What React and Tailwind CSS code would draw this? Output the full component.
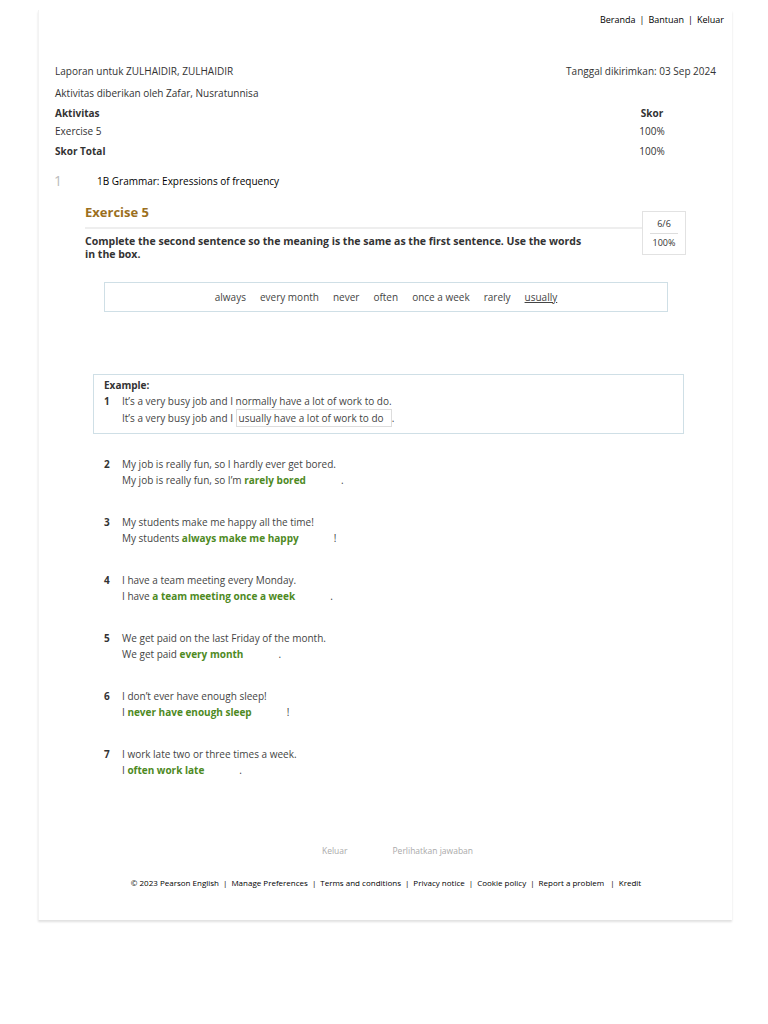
import React from 'react'

const words = ['always', 'every month', 'never', 'often', 'once a week', 'rarely', 'usually']

const items = [
  { n: 2, q: 'My job is really fun, so I hardly ever get bored.', pre: 'My job is really fun, so I\u2019m ', a: 'rarely bored', end: '.' },
  { n: 3, q: 'My students make me happy all the time!', pre: 'My students ', a: 'always make me happy', end: '!' },
  { n: 4, q: 'I have a team meeting every Monday.', pre: 'I have ', a: 'a team meeting once a week', end: '.' },
  { n: 5, q: 'We get paid on the last Friday of the month.', pre: 'We get paid ', a: 'every month', end: '.' },
  { n: 6, q: 'I don\u2019t ever have enough sleep!', pre: 'I ', a: 'never have enough sleep', end: '!' },
  { n: 7, q: 'I work late two or three times a week.', pre: 'I ', a: 'often work late', end: '.' },
]

const footerLinks = ['Manage Preferences', 'Terms and conditions', 'Privacy notice', 'Cookie policy', 'Report a problem ']

export default function App() {
  return (
    <div className="min-h-[1024px] bg-white pt-[10px] font-['Open_Sans',sans-serif] text-[#333]">
      <div className="ml-[38px] w-[694px] border-l border-[#f3f3f3] shadow-[0_2px_2px_rgba(0,0,0,0.12)] pb-[31px]">
        {/* top nav */}
        <div className="flex justify-end pr-[8px] pt-[3px] text-[9px] text-black leading-[14px]">
          <span>Beranda</span>
          <span className="mx-[4px]">|</span>
          <span>Bantuan</span>
          <span className="mx-[4px]">|</span>
          <span>Keluar</span>
        </div>

        {/* report header */}
        <div className="pl-[16px] pr-[16px] pt-[37px] text-[10px] leading-[14px]">
          <div className="flex justify-between">
            <span>Laporan untuk ZULHAIDIR, ZULHAIDIR</span>
            <span>Tanggal dikirimkan: 03 Sep 2024</span>
          </div>
          <div className="mt-[8px]">Aktivitas diberikan oleh Zafar, Nusratunnisa</div>
          <div className="mt-[6px] flex justify-between font-bold">
            <span>Aktivitas</span>
            <span className="mr-[34px] w-[60px] text-center">Skor</span>
          </div>
          <div className="mt-[4px] flex justify-between">
            <span>Exercise 5</span>
            <span className="mr-[34px] w-[60px] text-center">100%</span>
          </div>
          <div className="mt-[6px] flex justify-between">
            <span className="font-bold">Skor Total</span>
            <span className="mr-[34px] w-[60px] text-center">100%</span>
          </div>
        </div>

        {/* activity title */}
        <div className="mt-[15px] flex items-center pl-[15px]">
          <span className="w-[43px] text-[14px] leading-[16px] text-[#bbb]">1</span>
          <span className="text-[10px] leading-[14px] text-black">1B Grammar: Expressions of frequency</span>
        </div>

        {/* exercise */}
        <div className="mt-[13px] pl-[46px] pr-[46px]">
          <div className="flex">
            <div className="flex-1">
              <div className="border-b-2 border-[#eee] pb-[5px] text-[13px] font-bold leading-[20px] text-[#9b6f1e]">Exercise 5</div>
              <p className="mt-[6px] w-[505px] text-[10.5px] font-bold leading-[13px] text-[#333]">
                Complete the second sentence so the meaning is the same as the first sentence. Use the words in the box.
              </p>
            </div>
            <div className="mt-[9px] flex h-[44px] w-[44px] flex-col items-center justify-center border border-[#e2e2e2] text-[9px] leading-[12px]">
              <span className="pb-[3px]">6/6</span>
              <span className="h-px w-[28px] bg-[#ddd]" />
              <span className="pt-[3px]">100%</span>
            </div>
          </div>

          {/* word box */}
          <div className="ml-[19px] mr-[18px] mt-[21px] flex h-[30px] items-center justify-center gap-[14px] border border-[#cfdfe6] text-[10px] text-[#444]">
            {words.map((w) => (
              <span key={w} className={w === 'usually' ? 'underline' : ''}>{w}</span>
            ))}
          </div>

          {/* example */}
          <div className="ml-[8px] mr-[2px] mt-[62px] border border-[#cfdfe6] px-[10px] pb-[6px] pt-[2px] text-[10px] leading-[16px] text-[#444]">
            <div className="font-bold text-[#333]">Example:</div>
            <div className="flex">
              <span className="w-[18px] font-bold text-[#333]">1</span>
              <span>It’s a very busy job and I normally have a lot of work to do.</span>
            </div>
            <div className="flex items-center pl-[18px]">
              <span>It’s a very busy job and I&nbsp;</span>
              <span className="border border-[#ddd] px-[2px] leading-[16px]">usually have a lot of work to do&nbsp;&nbsp;</span>
              <span>.</span>
            </div>
          </div>

          {/* items */}
          <div className="mt-[22px] flex flex-col gap-[26px] pl-[19px] text-[10px] leading-[16px] text-[#444]">
            {items.map((it) => (
              <div key={it.n}>
                <div className="flex">
                  <span className="w-[18px] font-bold text-[#333]">{it.n}</span>
                  <span>{it.q}</span>
                </div>
                <div className="pl-[18px]">
                  <span>{it.pre}</span>
                  <span className="inline-block pr-[35px] font-bold text-[#4e8a1f]">{it.a}</span>
                  <span>{it.end}</span>
                </div>
              </div>
            ))}
          </div>
        </div>

        {/* buttons */}
        <div className="mt-[67px] flex justify-center gap-[45px] pl-[24px] text-[8.5px] text-[#aaa]">
          <span>Keluar</span>
          <span>Perlihatkan jawaban</span>
        </div>

        {/* footer */}
        <div className="mt-[19px] flex justify-center pl-[1px] text-[8px] leading-[12px] text-black">
          <span>© 2023 Pearson English</span>
          {footerLinks.map((l) => (
            <React.Fragment key={l}>
              <span className="mx-[4px]">|</span>
              <span className="whitespace-pre">{l}</span>
            </React.Fragment>
          ))}
          <span className="mx-[4px]">|</span>
          <span>Kredit</span>
        </div>
      </div>
    </div>
  )
}
